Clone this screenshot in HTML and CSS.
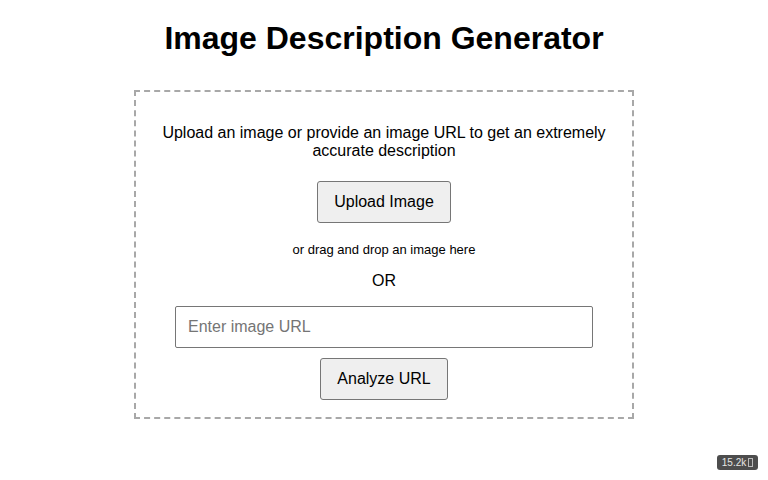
FILE: index.html
```html
<!DOCTYPE html>
<html lang="en">
<head>
<meta charset="utf-8">
<title>Image Description Generator</title>
<link rel="stylesheet" href="styles.css">
</head>
<body>
<h1 class="title">Image Description Generator</h1>
<div class="upload-area">
  <p class="intro">Upload an image or provide an image URL to get an extremely accurate description</p>
  <button class="btn btn-upload" type="button">Upload Image</button>
  <p class="hint">or drag and drop an image here</p>
  <p class="or">OR</p>
  <input class="url-input" type="text" placeholder="Enter image URL">
  <button class="btn btn-analyze" type="button">Analyze URL</button>
</div>
<div class="badge">15.2k<span class="badge-icon"></span></div>
</body>
</html>
```
FILE: styles.css
```css
html, body {
  margin: 0;
  padding: 0;
  background: #ffffff;
}
body {
  font-family: "Liberation Sans", Arial, sans-serif;
  color: #000;
}
.title {
  font-size: 32px;
  font-weight: bold;
  text-align: center;
  margin: 20px 0 33px;
  line-height: 37px;
}
.upload-area {
  box-sizing: border-box;
  width: 500px;
  margin: 0 auto;
  border: 2px dashed #a8a8a8;
  padding: 32px 20px 17px;
  display: flex;
  flex-direction: column;
  align-items: center;
}
.intro {
  margin: 0;
  font-size: 16px;
  line-height: normal;
  text-align: center;
}
.btn {
  font-family: "Liberation Sans", Arial, sans-serif;
  font-size: 16px;
  line-height: 18px;
  color: #000;
  background: #efefef;
  border: 1px solid #767676;
  border-radius: 3px;
  padding: 0;
  cursor: pointer;
}
.btn-upload {
  margin-top: 21px;
  width: 134px;
  height: 42px;
}
.hint {
  margin: 19px 0 0;
  font-size: 13px;
  line-height: 15px;
}
.or {
  margin: 15px 0 0;
  font-size: 16px;
  line-height: normal;
}
.url-input {
  box-sizing: border-box;
  margin-top: 16px;
  width: 418px;
  height: 42px;
  padding: 0 12px;
  font-family: "Liberation Sans", Arial, sans-serif;
  font-size: 16px;
  border: 1px solid #767676;
  border-radius: 2px;
  background: #fff;
}
.url-input::placeholder {
  color: #757575;
}
.btn-analyze {
  margin-top: 10px;
  width: 128px;
  height: 42px;
}
.badge {
  position: fixed;
  right: 10px;
  bottom: 10px;
  box-sizing: border-box;
  width: 41px;
  height: 15px;
  background: #4d4d4d;
  border-radius: 3px;
  color: #e6e6e6;
  font-size: 10px;
  line-height: 15px;
  display: flex;
  align-items: center;
  justify-content: center;
  gap: 2px;
}
.badge-icon {
  display: inline-block;
  width: 3px;
  height: 7px;
  border: 1px solid #bbb;
}
```
